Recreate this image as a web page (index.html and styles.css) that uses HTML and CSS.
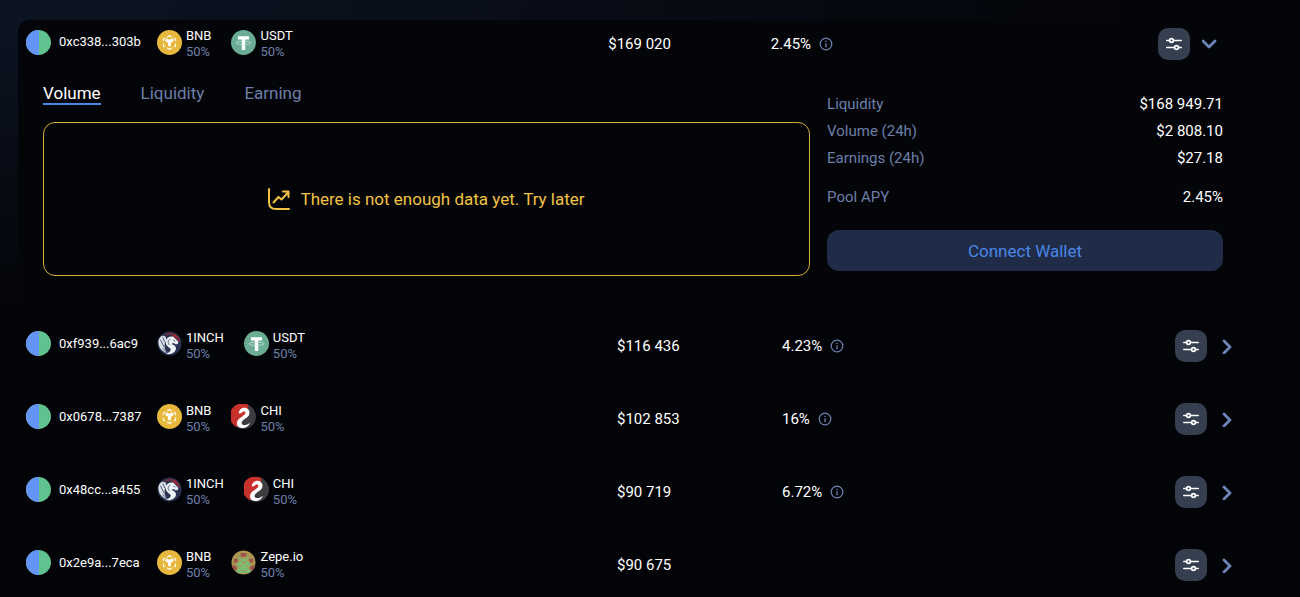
FILE: index.html
```
<!DOCTYPE html>
<html lang="en">
<head>
    <meta charset="UTF-8">
    <meta name="viewport" content="width=device-width, initial-scale=1.0">
    <title>Liquidity Pools</title>
    <link rel="stylesheet" href="styles.css">
</head>
<body>
    <!-- Shared icons -->
    <svg class="sprite" aria-hidden="true">
        <symbol id="pool" viewBox="0 0 26 26">
            <circle cx="13" cy="13" r="13" fill="#5fc28f"/>
            <path d="M13.500 0H13a13 13 0 0 0 0 26h.5z" fill="#6495f5"/>
        </symbol>
        <symbol id="bnb" viewBox="0 0 26 26">
            <circle cx="13" cy="13" r="13" fill="#e8b83d"/>
            <path d="M10.500 7.300L13 5.900l2.500 1.400M17.300 8.300l2 1.200v2.300M19.300 14v2.500l-2 1.200M15.500 18.700L13 20.100l-2.500-1.400M8.700 17.700l-2-1.200V14M6.700 11.800V9.500l2-1.200" fill="none" stroke="#fff" stroke-width="1.100"/>
            <path d="M8.800 9.800l1.700-1L13 10.200l2.500-1.400 1.700 1v2l-2.700 1.500v3.200L13 17.400l-1.500-.9v-3.200l-2.700-1.500z" fill="#fff"/>
        </symbol>
        <symbol id="usdt" viewBox="0 0 26 26">
            <circle cx="13" cy="13" r="13" fill="#6aac94"/>
            <path d="M7.300 6.500h11.400v3.400h-3.900v11h-3.600v-11H7.300z" fill="#fff"/>
            <ellipse cx="13" cy="13.300" rx="7.800" ry="1.700" fill="none" stroke="#d5ebe3" stroke-width=".7"/>
        </symbol>
        <symbol id="oneinch" viewBox="0 0 26 26">
            <circle cx="13" cy="13" r="12.500" fill="#26324f"/>
            <path d="M8 3.500C12 1 17 1 20 4l-3 1-4-1-4 1z" fill="#6b2c40"/>
            <path d="M18 3c4 2 6 5 6 9l-3-4-5-3z" fill="#a32a38"/>
            <path d="M1.500 10C3 5 6 4 9 6l1 3-2 4v5l2 5C4 21 1 16 1.500 10z" fill="#dce1e8"/>
            <path d="M9 11c1-4 4-6 8-5l5 5v2l-2 1-3-1.500-2 1c4 1 6 4 4 7-2 3-6 4.500-10 3 4-1 6-3 5-5-2-2-5-3-5-7.500z" fill="#eef1f5"/>
            <path d="M3.500 9l4 8M6 6.500l2 5M14 8.500c-3 1-3 4-1 6M17 9.500l2 1M6 18c2 3 4 4 6 4" fill="none" stroke="#4a5878" stroke-width="1"/>
        </symbol>
        <symbol id="chi" viewBox="0 0 26 26">
            <circle cx="13" cy="13" r="13" fill="#3d3d40"/>
            <path d="M18 1A13 13 0 1 0 7 24.500C6 20 9 17 13 14s5-7 5-13z" fill="#c8302c"/>
            <path d="M8 9.500C8.500 6 11 3.600 14.500 4c4 .5 6 4.500 4 8-2 3-7 4.500-7.500 7.500-.2 3 4.500 3.500 9 0-2 4-5 6-9 5.500-5-.6-6-5-3.500-8.500 2-2.800 7-4.500 7.500-7.200.2-1.600-1.500-1.800-3-1L9.500 10z" fill="#fff"/>
        </symbol>
        <symbol id="zepe" viewBox="0 0 26 26">
            <clipPath id="round"><circle cx="13" cy="13" r="12.500"/></clipPath>
            <g clip-path="url(#round)">
                <path d="M0 0h26v26H0z" fill="#a99450"/>
                <path d="M10 3h6v4h-6zM3 9h4v4H3zM19 9h4v4h-4zM1 16h5v5H1zM20 16h5v5h-5z" fill="#9c544c"/>
                <path d="M8 7h2v2h6V7h2v3h-2v2h3v3h2v2h-3v3h2v4h-4v-3h-6v3H6v-4h2v-3H5v-2h2v-3h3v-2H8z" fill="#7cbc78"/>
                <path d="M11 12h4v2h-4zM9 16h2v2H9zM15 16h2v2h-2z" fill="#a99450"/>
                <path d="M10 22h6v2h-6z" fill="#7cbc78"/>
            </g>
        </symbol>
        <symbol id="info" viewBox="0 0 14 14">
            <circle cx="7" cy="7" r="5.800" fill="none" stroke="#6c83b0" stroke-width="1.200"/>
            <path d="M7 6.300v4M7 3.700v1.400" stroke="#6c83b0" stroke-width="1.300"/>
        </symbol>
        <symbol id="sliders" viewBox="0 0 16 16">
            <g fill="none" stroke="#fff" stroke-width="1.600" stroke-linecap="round">
                <path d="M.8 4.500h2.700M7.500 4.500h7.700M.8 11.500h7.700M12.500 11.500h2.700"/>
                <circle cx="5.500" cy="4.500" r="1.900"/>
                <circle cx="10.500" cy="11.500" r="1.900"/>
            </g>
        </symbol>
        <symbol id="chevron" viewBox="0 0 16 16">
            <path d="M5 3l6 6-6 6" fill="none" stroke="#6c86b8" stroke-width="2.800" stroke-linecap="round" stroke-linejoin="round"/>
        </symbol>
    </svg>

    <main class="pools">
        <section class="pool-card">
            <div class="pool-row">
                <div class="pool">
                    <svg class="coin"><use href="#pool"/></svg>
                    <span class="address">0xc338...303b</span>
                    <div class="token"><svg class="coin"><use href="#bnb"/></svg><div>BNB<small>50%</small></div></div>
                    <div class="token"><svg class="coin"><use href="#usdt"/></svg><div>USDT<small>50%</small></div></div>
                </div>
                <div class="value">$169 020</div>
                <div class="value">2.45%<svg class="info"><use href="#info"/></svg></div>
                <div class="actions">
                    <button class="settings" aria-label="Manage pool"><svg><use href="#sliders"/></svg></button>
                    <button class="toggle open" aria-label="Collapse"><svg><use href="#chevron"/></svg></button>
                </div>
            </div>
            <div class="details">
                <div class="chart">
                    <nav class="tabs">
                        <button class="tab active">Volume</button>
                        <button class="tab">Liquidity</button>
                        <button class="tab">Earning</button>
                    </nav>
                    <div class="no-data">
                        <svg viewBox="0 0 22 22" fill="none" stroke="#f2c244" stroke-width="2" stroke-linecap="round" stroke-linejoin="round">
                            <path d="M1 1v13q0 7 7 7h13"/>
                            <path d="M5.500 14.500l5-5.500 3 2.500L20 4.500M15 3.500h5.500V9"/>
                        </svg>
                        <span>There is not enough data yet. Try later</span>
                    </div>
                </div>
                <div class="summary">
                    <dl class="stats">
                        <div><dt>Liquidity</dt><dd>$168 949.71</dd></div>
                        <div><dt>Volume (24h)</dt><dd>$2 808.10</dd></div>
                        <div><dt>Earnings (24h)</dt><dd>$27.18</dd></div>
                        <div class="apy"><dt>Pool APY</dt><dd>2.45%</dd></div>
                    </dl>
                    <button class="connect">Connect Wallet</button>
                </div>
            </div>
        </section>

        <div class="pool-row">
            <div class="pool">
                <svg class="coin"><use href="#pool"/></svg>
                <span class="address">0xf939...6ac9</span>
                <div class="token"><svg class="coin"><use href="#oneinch"/></svg><div>1INCH<small>50%</small></div></div>
                <div class="token"><svg class="coin"><use href="#usdt"/></svg><div>USDT<small>50%</small></div></div>
            </div>
            <div class="value">$116 436</div>
            <div class="value">4.23%<svg class="info"><use href="#info"/></svg></div>
            <div class="actions">
                <button class="settings" aria-label="Manage pool"><svg><use href="#sliders"/></svg></button>
                <button class="toggle" aria-label="Expand"><svg><use href="#chevron"/></svg></button>
            </div>
        </div>

        <div class="pool-row">
            <div class="pool">
                <svg class="coin"><use href="#pool"/></svg>
                <span class="address">0x0678...7387</span>
                <div class="token"><svg class="coin"><use href="#bnb"/></svg><div>BNB<small>50%</small></div></div>
                <div class="token"><svg class="coin"><use href="#chi"/></svg><div>CHI<small>50%</small></div></div>
            </div>
            <div class="value">$102 853</div>
            <div class="value">16%<svg class="info"><use href="#info"/></svg></div>
            <div class="actions">
                <button class="settings" aria-label="Manage pool"><svg><use href="#sliders"/></svg></button>
                <button class="toggle" aria-label="Expand"><svg><use href="#chevron"/></svg></button>
            </div>
        </div>

        <div class="pool-row">
            <div class="pool">
                <svg class="coin"><use href="#pool"/></svg>
                <span class="address">0x48cc...a455</span>
                <div class="token"><svg class="coin"><use href="#oneinch"/></svg><div>1INCH<small>50%</small></div></div>
                <div class="token"><svg class="coin"><use href="#chi"/></svg><div>CHI<small>50%</small></div></div>
            </div>
            <div class="value">$90 719</div>
            <div class="value">6.72%<svg class="info"><use href="#info"/></svg></div>
            <div class="actions">
                <button class="settings" aria-label="Manage pool"><svg><use href="#sliders"/></svg></button>
                <button class="toggle" aria-label="Expand"><svg><use href="#chevron"/></svg></button>
            </div>
        </div>

        <div class="pool-row">
            <div class="pool">
                <svg class="coin"><use href="#pool"/></svg>
                <span class="address">0x2e9a...7eca</span>
                <div class="token"><svg class="coin"><use href="#bnb"/></svg><div>BNB<small>50%</small></div></div>
                <div class="token"><svg class="coin"><use href="#zepe"/></svg><div>Zepe.io<small>50%</small></div></div>
            </div>
            <div class="value">$90 675</div>
            <div class="value"></div>
            <div class="actions">
                <button class="settings" aria-label="Manage pool"><svg><use href="#sliders"/></svg></button>
                <button class="toggle" aria-label="Expand"><svg><use href="#chevron"/></svg></button>
            </div>
        </div>
    </main>
</body>
</html>
```

FILE: styles.css
```
:root {
    --bg: #030408;
    --card: #040508;
    --text: #fff;
    --muted: #6c7fa8;
    --blue: #4a86e8;
    --yellow: #f2c244;
}
* {
    box-sizing: border-box;
}
body {
    margin: 0;
    font-family: Roboto, "Liberation Sans", sans-serif;
    font-size: 15px;
    color: var(--text);
    background: radial-gradient(ellipse 1200px 320px at 0 0, #0c1423, var(--bg)) no-repeat var(--bg);
}
button {
    padding: 0;
    border: none;
    background: none;
    font: inherit;
    color: inherit;
    cursor: pointer;
}
svg {
    display: block;
    flex: none;
}
.sprite {
    position: absolute;
    width: 0;
    height: 0;
}
.pools {
    padding: 20px 52px 0 18px;
}
.pool-card {
    margin-bottom: 12px;
    padding-bottom: 21px;
    border-radius: 12px;
    background: var(--card);
}
.pool-row {
    display: grid;
    grid-template-columns: 591fr 165fr 393fr 60px;
    align-items: center;
    height: 73px;
    padding: 0 13px 0 8px;
}
.pool-card .pool-row {
    height: 48px;
    padding-right: 30px;
}
.pool {
    display: flex;
    align-items: center;
    padding-bottom: 4px;
    font-size: 13px;
    line-height: 16px;
}
.coin {
    width: 25px;
    height: 25px;
}
.address {
    width: 90px;
    margin: 0 8px;
}
.token {
    display: flex;
    align-items: center;
    gap: 4px;
    margin-right: 20px;
}
.token > div {
    padding-top: 4px;
}
.token small {
    display: block;
    font-size: 13px;
    color: var(--muted);
}
.value {
    display: flex;
    align-items: center;
    gap: 8px;
}
.info {
    width: 14px;
    height: 14px;
}
.actions {
    display: flex;
    align-items: center;
    gap: 12px;
}
.settings {
    display: flex;
    align-items: center;
    justify-content: center;
    width: 32px;
    height: 32px;
    border-radius: 10px;
    background: #363f50;
}
.settings svg,
.toggle svg {
    width: 16px;
    height: 16px;
}
.toggle.open svg {
    transform: rotate(90deg);
}
.details {
    display: grid;
    grid-template-columns: 31fr 16fr;
    gap: 17px;
    padding: 15px 25px 0;
}
.chart {
    display: flex;
    flex-direction: column;
}
.tabs {
    display: flex;
    gap: 40px;
    margin-bottom: 17px;
}
.tab {
    border-bottom: 2px solid transparent;
    font-size: 17px;
    line-height: 20px;
    color: var(--muted);
}
.tab.active {
    border-color: var(--blue);
    color: var(--text);
}
.no-data {
    display: flex;
    align-items: center;
    justify-content: center;
    gap: 10px;
    height: 154px;
    border: 1px solid #d9ad3c;
    border-radius: 12px;
    font-size: 17px;
    color: var(--yellow);
}
.no-data svg {
    width: 22px;
    height: 22px;
}
.summary {
    padding-top: 8px;
}
.stats {
    margin: 0 0 19px;
    line-height: 27px;
}
.stats div {
    display: flex;
    justify-content: space-between;
}
.stats .apy {
    margin-top: 12px;
}
.stats dt {
    color: var(--muted);
}
.stats dd {
    margin: 0;
}
.connect {
    width: 100%;
    height: 41px;
    border-radius: 12px;
    background: #202c47;
    font-size: 17px;
    color: var(--blue);
}
```
